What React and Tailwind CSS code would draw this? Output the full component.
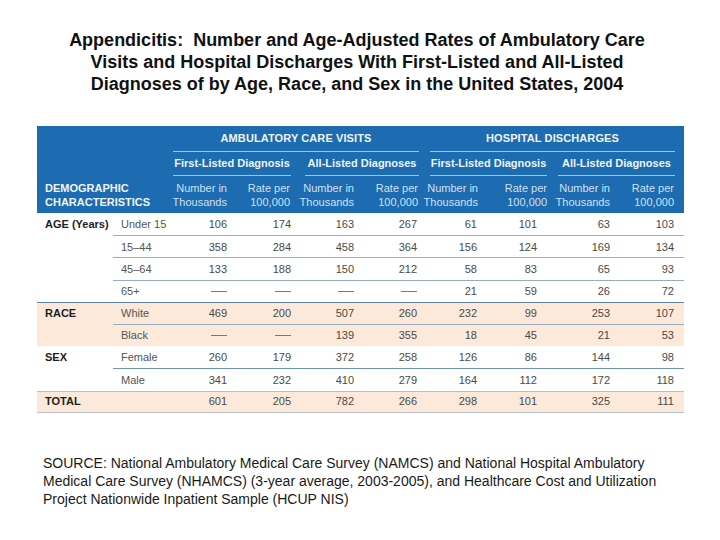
import React from "react";

const W = [
  "w-[76px]", "w-[60px]", "w-[56px]", "w-[62px]", "w-[14px]", "w-[51px]", "w-[63px]",
  "w-[11px]", "w-[50px]", "w-[67px]", "w-[11px]", "w-[54px]", "w-[63px]", "w-[9px]",
];

const rows = [
  { g: "AGE (Years)", s: "Under 15", v: ["106", "174", "163", "267", "61", "101", "63", "103"], top: "none", peach: false },
  { s: "15–44", v: ["358", "284", "458", "364", "156", "124", "169", "134"], top: "inner", peach: false },
  { s: "45–64", v: ["133", "188", "150", "212", "58", "83", "65", "93"], top: "inner", peach: false },
  { s: "65+", v: ["—", "—", "—", "—", "21", "59", "26", "72"], top: "inner", peach: false },
  { g: "RACE", s: "White", v: ["469", "200", "507", "260", "232", "99", "253", "107"], top: "group", peach: true },
  { s: "Black", v: ["—", "—", "139", "355", "18", "45", "21", "53"], top: "inner", peach: true },
  { g: "SEX", s: "Female", v: ["260", "179", "372", "258", "126", "86", "144", "98"], top: "none", peach: false },
  { s: "Male", v: ["341", "232", "410", "279", "164", "112", "172", "118"], top: "inner2", peach: false },
  { g: "TOTAL", s: "", v: ["601", "205", "782", "266", "298", "101", "325", "111"], top: "group", peach: true },
];

function Val({ children, cls }) {
  const dash = children === "—";
  return (
    <div className={`${cls} flex items-center justify-end`}>
      {dash ? <span className="inline-block w-[16px] h-px bg-[#777]" /> : children}
    </div>
  );
}

function DataRow({ r, last }) {
  const outer = r.top === "group" ? "border-t border-[#5c83a8]" : "";
  const inner =
    r.top === "inner" ? "border-t border-[#9aabbb]" : r.top === "inner2" ? "border-t border-[#6d94bb]" : "";
  return (
    <div className={`flex h-[22.2px] ${outer} ${r.peach ? "bg-[#fce9d9]" : "bg-white"} ${last ? "border-b border-[#b9c2cb]" : ""}`}>
      <div className={`${W[0]} pl-[8px] flex items-center font-bold text-[#1e1e1e]`}>{r.g || ""}</div>
      <div className={`flex flex-1 ${inner}`}>
        <div className={`${W[1]} pl-[8px] flex items-center text-[#555]`}>{r.s}</div>
        <Val cls={`${W[2]} pr-[2px]`}>{r.v[0]}</Val>
        <Val cls={`${W[3]} pr-[0px]`}>{r.v[1]}</Val>
        <div className={W[4]} />
        <Val cls={`${W[5]} pr-[2px]`}>{r.v[2]}</Val>
        <Val cls={`${W[6]} pr-[2px]`}>{r.v[3]}</Val>
        <div className={W[7]} />
        <Val cls={`${W[8]} pr-[3px]`}>{r.v[4]}</Val>
        <Val cls={`${W[9]} pr-[10px]`}>{r.v[5]}</Val>
        <div className={W[10]} />
        <Val cls={`${W[11]} pr-[2px]`}>{r.v[6]}</Val>
        <Val cls={`${W[12]} pr-[1px]`}>{r.v[7]}</Val>
        <div className={W[13]} />
      </div>
    </div>
  );
}

function Sub({ w, pr }) {
  return (
    <div className={`${w} ${pr} flex flex-col items-end justify-center leading-[14px] whitespace-nowrap`}>
      <span>Number in</span>
      <span>Thousands</span>
    </div>
  );
}
function Rate({ w, pr }) {
  return (
    <div className={`${w} ${pr} flex flex-col items-end justify-center leading-[14px] whitespace-nowrap`}>
      <span>Rate per</span>
      <span>100,000</span>
    </div>
  );
}

export default function App() {
  return (
    <div className="w-[720px] h-[540px] bg-white font-['Liberation_Sans',Arial,sans-serif] overflow-hidden">
      <div className="pt-[29px] pr-[6px] text-center font-bold text-[18px] leading-[22px] text-[#111] whitespace-pre">
        <div>Appendicitis:  Number and Age-Adjusted Rates of Ambulatory Care</div>
        <div>Visits and Hospital Discharges With First-Listed and All-Listed</div>
        <div>Diagnoses of by Age, Race, and Sex in the United States, 2004</div>
      </div>

      <div className="ml-[37px] mt-[31px] w-[647px] text-[11px]">
        {/* header */}
        <div className="bg-[#1d6bb0] h-[87px] flex flex-col text-[#eef4fa]">
          <div className="flex h-[26px]">
            <div className="w-[136px]" />
            <div className="w-[246px] flex items-center justify-center font-bold border-b border-[#a4c4e4] tracking-[0.1px]">
              AMBULATORY CARE VISITS
            </div>
            <div className="w-[11px]" />
            <div className="w-[245px] flex items-center justify-center font-bold border-b border-[#a4c4e4] tracking-[0.1px]">
              HOSPITAL DISCHARGES
            </div>
          </div>
          <div className="flex h-[24px]">
            <div className="w-[136px]" />
            <div className="w-[118px] flex items-center justify-center font-bold border-b border-[#a4c4e4] whitespace-nowrap">First-Listed Diagnosis</div>
            <div className="w-[14px]" />
            <div className="w-[114px] flex items-center justify-center font-bold border-b border-[#a4c4e4] whitespace-nowrap">All-Listed Diagnoses</div>
            <div className="w-[11px]" />
            <div className="w-[117px] flex items-center justify-center font-bold border-b border-[#a4c4e4] whitespace-nowrap">First-Listed Diagnosis</div>
            <div className="w-[11px]" />
            <div className="w-[117px] flex items-center justify-center font-bold border-b border-[#a4c4e4] whitespace-nowrap">All-Listed Diagnoses</div>
          </div>
          <div className="flex flex-1 text-[#cfe0f1]">
            <div className="w-[136px] pl-[8px] flex flex-col justify-center font-bold leading-[14px] text-[#eef4fa]">
              <span>DEMOGRAPHIC</span>
              <span>CHARACTERISTICS</span>
            </div>
            <Sub w={W[2]} pr="pr-[2px]" />
            <Rate w={W[3]} pr="pr-[1px]" />
            <div className={W[4]} />
            <Sub w={W[5]} pr="pr-[2px]" />
            <Rate w={W[6]} pr="pr-[1px]" />
            <div className={W[7]} />
            <Sub w={W[8]} pr="pr-[2px]" />
            <Rate w={W[9]} pr="pr-[0px]" />
            <div className={W[10]} />
            <Sub w={W[11]} pr="pr-[2px]" />
            <Rate w={W[12]} pr="pr-[1px]" />
            <div className={W[13]} />
          </div>
        </div>
        {/* body */}
        <div className="text-[#4a4a4a]">
          {rows.map((r, i) => (
            <DataRow key={i} r={r} last={i === rows.length - 1} />
          ))}
        </div>
      </div>

      <div className="ml-[43px] mt-[41px] w-[660px] text-[14px] leading-[18px] text-[#1a1a1a]">
        <div>SOURCE: National Ambulatory Medical Care Survey (NAMCS) and National Hospital Ambulatory</div>
        <div>Medical Care Survey (NHAMCS) (3-year average, 2003-2005), and Healthcare Cost and Utilization</div>
        <div>Project Nationwide Inpatient Sample (HCUP NIS)</div>
      </div>
    </div>
  );
}
